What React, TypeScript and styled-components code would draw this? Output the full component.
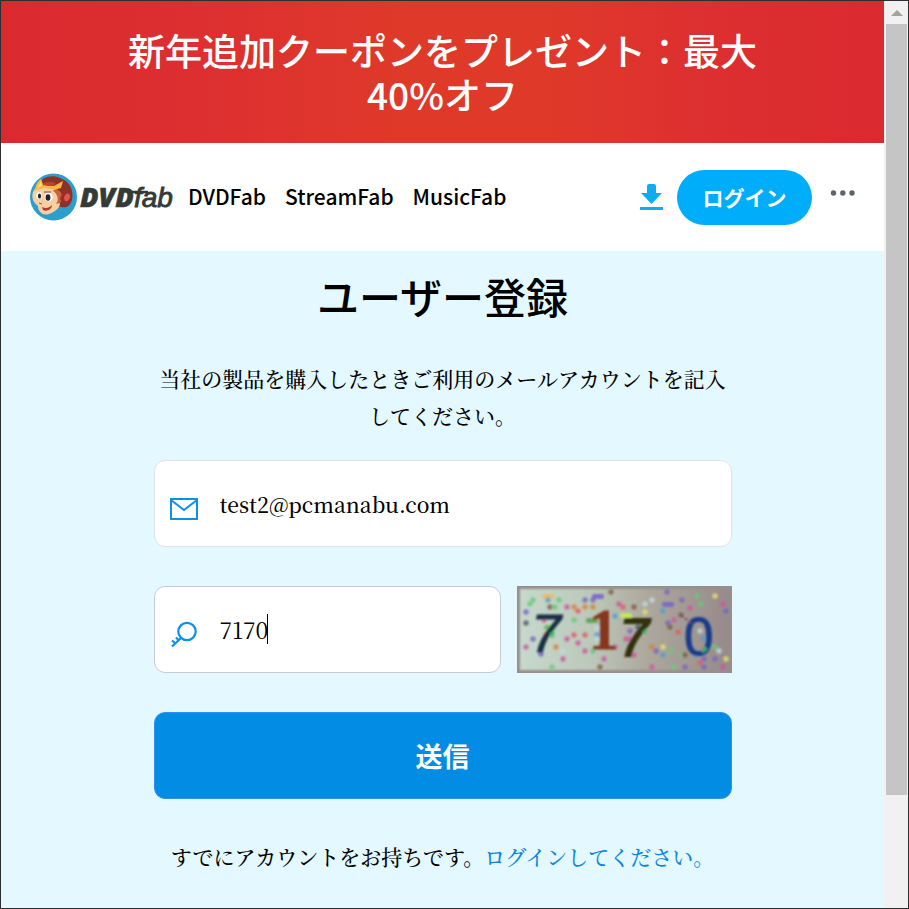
import React, { useState } from "react";
import styled, { createGlobalStyle } from "styled-components";

const sans = `"Noto Sans CJK JP", "Noto Sans", sans-serif`;
const serif = `"Noto Serif CJK JP", "Source Han Serif JP", "Liberation Serif", "Noto Sans CJK JP", serif`;

const GlobalStyle = createGlobalStyle`
  *, *::before, *::after { box-sizing: border-box; }
  body { margin: 0; background: #e4f8ff; color: #000; font-family: ${serif}; }
  h1, p { margin: 0; }
  a { text-decoration: none; }
`;

const Window = styled.div`
  display: flex;
  min-height: 100vh;
  border: 1px solid #2e2e2e;
`;

const Page = styled.div`
  flex: 1;
  min-width: 0;
`;

const ScrollTrack = styled.div`
  width: 24px;
  padding: 0 1px 0 2px;
  background: #f0f1f0;
  display: flex;
  flex-direction: column;
`;

const ScrollArrow = styled.div`
  height: 23px;
  display: flex;
  align-items: center;
  justify-content: center;
`;

const ScrollThumb = styled.div`
  flex: 0 0 85%;
  background: #c5c5c5;
`;

const Banner = styled.a`
  display: flex;
  justify-content: center;
  padding: 27px 24px;
  background: linear-gradient(90deg, #da2a30 0%, #dd3030 25%, #df3a29 47%, #df3929 62%, #dd3030 78%, #da2a30 100%);
  color: #fff;
  font: 500 37px/44px ${sans};
  text-align: center;
`;

const BannerText = styled.span`
  max-width: 664px;
`;

const Header = styled.header`
  display: flex;
  align-items: center;
  height: 108px;
  padding: 0 28px;
  background: #fff;
`;

const Brand = styled.a`
  display: flex;
  align-items: center;
  width: 145px;
  color: #343a36;
`;

const Nav = styled.nav`
  display: flex;
  gap: 19px;
  margin-left: 14px;
  padding-bottom: 2px;
`;

const NavLink = styled.a`
  color: #000;
  font: 500 21px/32px ${sans};
`;

const Actions = styled.div`
  display: flex;
  align-items: center;
  gap: 14px;
  margin-left: auto;
`;

const IconButton = styled.button`
  display: flex;
  padding: 0;
  border: 0;
  background: none;
`;

const MoreButton = styled(IconButton)`
  margin-left: 4px;
  padding-bottom: 8px;
`;

const LoginButton = styled.a`
  width: 135px;
  border-radius: 28px;
  background: #00adfa;
  color: #fff;
  font: 700 21px/55px ${sans};
  text-align: center;
`;

const Main = styled.main`
  width: calc(100% - 32px);
  max-width: 578px;
  margin: 0 auto;
  padding: 15px 0 32px;
  text-align: center;
`;

const Title = styled.h1`
  font: 500 42px/60px ${sans};
`;

const Lead = styled.p`
  margin: 34px 0 26px;
  font-size: 21px;
  font-weight: 500;
  line-height: 37px;
`;

const Form = styled.form`
  display: flex;
  flex-direction: column;
  gap: 39px;
`;

const CaptchaRow = styled.div`
  display: flex;
  gap: 16px;
`;

const Field = styled.label<{ $active?: boolean }>`
  position: relative;
  flex: 1;
  display: flex;
  align-items: center;
  gap: 20px;
  min-width: 0;
  min-height: 87px;
  padding: 0 13px;
  border: 1px solid ${(p) => (p.$active ? "#c8ccd2" : "#dbe3f0")};
  border-radius: 11px;
  background: #fff;

  svg { flex: none; margin-top: 11px; }
`;

const Input = styled.input<{ $size: number; $weight: number }>`
  flex: 1;
  min-width: 0;
  padding: 0;
  border: 0;
  outline: 0;
  background: none;
  color: #000;
  font: ${(p) => p.$weight} ${(p) => p.$size}px/32px ${serif};
`;

const Caret = styled.span`
  position: absolute;
  top: 27px;
  left: 112px;
  width: 1px;
  height: 30px;
  background: #000;
`;

const CaptchaImage = styled.svg`
  display: block;
  width: 215px;
  height: 87px;
`;

const Submit = styled.button`
  min-height: 87px;
  border: 1px solid #2e90f5;
  border-radius: 11px;
  background: #038ce4;
  color: #fff;
  font: 700 27px/40px ${sans};
`;

const Already = styled.p`
  margin-top: 39px;
  font-size: 21px;
  font-weight: 500;
  line-height: 37px;
`;

const TextLink = styled.a`
  color: #0b86dc;
`;

function Logo() {
  return (
    <svg width="145" height="50" viewBox="0 0 145 50" role="img" aria-label="DVDFab">
      <defs>
        <clipPath id="face"><circle cx="24.500" cy="25" r="22" /></clipPath>
      </defs>
      <circle cx="24.500" cy="25" r="23.500" fill="#2a9fce" />
      <g clipPath="url(#face)">
        <path d="M9 13C12 5 23 2 31 6C40 9 45 17 43 28C41 35 36 37 29 34L15 18Z" fill="#8c3328" />
        <path d="M5 18C9 13 19 14 26 17C30 18 32 22 29 27C34 32 29 39 20 42C14 44 9 40 9 34C3 30 2 23 5 18Z" fill="#f8cfa4" />
        <path d="M26 17C33 18 35 25 31 31L27 32C30 28 29 22 24 19Z" fill="#c9643f" />
        <path d="M31 27C33 18 41 17 43 23C44 29 38 34 34 31Z" fill="#9c2c2a" />
        <path d="M35 26C36 21 40 20 41 24C41 28 38 30 36 29Z" fill="#d9594b" />
        <path d="M13 12C18 9 24 9 27 12L22 15L14 16Z" fill="#b04a2a" />
        <path d="M5 19L8 11L12 6L14 13L19 14L25 14L34 9L32 16L25 18L17 16L10 17Z" fill="#fbb644" />
        <path d="M8 16L12 9L13 14Z" fill="#ffd978" />
        <ellipse cx="10" cy="23.500" rx="2.600" ry="3.500" fill="#fff" />
        <ellipse cx="19.500" cy="25" rx="4" ry="4.500" fill="#fff" />
        <ellipse cx="10.500" cy="24" rx="1.600" ry="2.600" fill="#24222c" />
        <ellipse cx="19" cy="25.500" rx="2.400" ry="3.200" fill="#24222c" />
        <path d="M15 20L22 20" stroke="#7a4430" strokeWidth="1" />
        <path d="M13 35C17 37 20 36 23 33C23 37 18 40 14 38Z" fill="#b23a34" />
        <path d="M10 31L13 32" stroke="#ae5438" strokeWidth="1" />
      </g>
      <text x="51" y="35" fill="#343a36" stroke="#343a36" strokeWidth="0.600" fontFamily="Open Sans" fontStyle="italic" fontWeight="800" fontSize="27">DVD</text>
      <text x="105" y="35" fill="#343a36" stroke="#343a36" strokeWidth="0.900" fontFamily="Liberation Sans" fontStyle="italic" fontSize="28">fab</text>
      <path d="M102 20H119" stroke="#343a36" strokeWidth="2.500" />
    </svg>
  );
}

const palette: Record<string, string> = {
  v: "#7965c4", g: "#69c879", p: "#cb59a2", b: "#539fd2", y: "#e5e36e",
  o: "#db8135", r: "#e45c62", w: "#bedce0", k: "#495b65", m: "#805d46",
};

const specks: [number, number, string][] = [
  [9, 26, "v"], [9, 37, "k"], [13, 18, "g"], [16, 14, "g"], [9, 61, "p"],
  [31, 14, "b"], [42, 14, "g"], [33, 21, "m"], [38, 21, "g"], [27, 34, "p"],
  [50, 21, "p"], [57, 21, "o"], [61, 25, "r"], [57, 34, "g"], [29, 49, "r"],
  [35, 50, "g"], [16, 53, "v"], [39, 61, "o"], [46, 65, "w"], [46, 73, "p"],
  [24, 68, "v"], [50, 53, "p"], [57, 49, "r"], [61, 57, "p"], [68, 65, "p"],
  [76, 65, "g"], [68, 14, "v"], [76, 14, "v"], [68, 21, "o"], [76, 21, "o"],
  [94, 6, "m"], [102, 18, "p"], [106, 21, "r"], [117, 21, "m"], [98, 30, "b"],
  [80, 42, "w"], [80, 49, "b"], [87, 73, "p"], [83, 81, "m"], [35, 81, "g"],
  [68, 49, "r"], [80, 53, "w"], [98, 61, "p"], [113, 45, "v"], [121, 41, "k"],
  [128, 26, "y"], [128, 18, "w"], [135, 14, "w"], [146, 25, "b"], [150, 6, "v"],
  [157, 34, "p"], [151, 37, "v"], [153, 41, "m"], [161, 46, "r"], [164, 29, "m"],
  [165, 14, "v"], [180, 10, "g"], [198, 10, "y"], [206, 18, "p"], [209, 25, "v"],
  [184, 18, "g"], [173, 22, "p"], [183, 45, "w"], [190, 38, "b"], [187, 53, "b"],
  [165, 69, "g"], [168, 69, "m"], [179, 69, "b"], [198, 61, "g"], [202, 65, "w"],
  [209, 73, "y"], [198, 73, "v"], [206, 81, "p"], [187, 73, "v"], [187, 81, "v"],
  [183, 77, "r"], [168, 81, "v"], [157, 81, "g"], [135, 81, "p"], [139, 65, "v"],
  [146, 69, "b"], [154, 65, "g"], [146, 61, "y"], [135, 61, "o"], [117, 69, "p"],
  [109, 53, "p"], [113, 53, "p"], [128, 45, "g"],
];

const streaks: [number, number, string][] = [
  [31, 10, "#eeb95b"], [81, 10, "#7661cd"], [109, 29, "#c8ed50"], [151, 18, "#7661cd"],
  [33, 41, "#65b95d"], [75, 34, "#589d4d"],
];

function Captcha() {
  return (
    <CaptchaImage viewBox="0 0 215 87" role="img" aria-label="7170">
      <defs>
        <linearGradient id="paper">
          <stop offset="0" stopColor="#c6d9cd" />
          <stop offset="0.350" stopColor="#bbc8b9" />
          <stop offset="0.600" stopColor="#ada99d" />
          <stop offset="1" stopColor="#978a8a" />
        </linearGradient>
        <filter id="soft"><feGaussianBlur stdDeviation="0.8" /></filter>
      </defs>
      <rect width="215" height="87" fill="#988e8b" />
      <rect x="3" y="3" width="209" height="81" fill="url(#paper)" filter="url(#soft)" />
      <g filter="url(#soft)">
        {streaks.map(([x, y, c]) => (
          <rect key={`${x}-${y}`} x={x - 6} y={y - 2} width="12" height="5" rx="2" fill={c} opacity="0.85" />
        ))}
        <g opacity="0.8">
          {specks.map(([x, y, c]) => (
            <circle key={`${x}-${y}`} cx={x} cy={y} r="2.700" fill={palette[c]} />
          ))}
        </g>
        <g fontFamily="Liberation Sans" fontSize="54">
          <text x="14" y="66" fill="#142e43" stroke="#142e43" fontStyle="italic">7</text>
          <text x="72" y="63" fill="#87351f" stroke="#87351f" fontFamily="Liberation Serif" fontSize="58" fontWeight="700">1</text>
          <text x="102" y="70" fill="#33310e" stroke="#33310e" strokeWidth="2" fontStyle="italic">7</text>
          <text x="167" y="69" fill="#193b8c" stroke="#193b8c" fontSize="53">0</text>
        </g>
        <path d="M164 29L175 38" stroke="#804775" strokeWidth="2" strokeDasharray="3 2" />
        <path d="M33 49L37 46M126 47L129 44M185 66L190 62" stroke="#3fae6c" strokeWidth="3" />
      </g>
    </CaptchaImage>
  );
}

export default function App() {
  const [email, setEmail] = useState("test2@pcmanabu.com");
  const [code, setCode] = useState("7170");

  return (
    <>
      <GlobalStyle />
      <Window lang="ja">
        <Page>
          <Banner href="#coupon">
            <BannerText>新年追加クーポンをプレゼント：最大40%オフ</BannerText>
          </Banner>
          <Header>
            <Brand href="#home"><Logo /></Brand>
            <Nav>
              <NavLink href="#dvdfab">DVDFab</NavLink>
              <NavLink href="#streamfab">StreamFab</NavLink>
              <NavLink href="#musicfab">MusicFab</NavLink>
            </Nav>
            <Actions>
              <IconButton type="button" aria-label="ダウンロード">
                <svg width="23" height="26" viewBox="0 0 23 26" fill="#0eadef">
                  <path d="M7 2Q7 0 9 0H14Q16 0 16 2V9H22L11.500 20L1 9H7Z" />
                  <path d="M0 23H23V26H0Z" />
                </svg>
              </IconButton>
              <LoginButton href="#login">ログイン</LoginButton>
              <MoreButton type="button" aria-label="メニュー">
                <svg width="26" height="6" viewBox="0 0 26 6" fill="#5c6468">
                  <circle cx="3.500" cy="3" r="2.700" />
                  <circle cx="12.800" cy="3" r="2.700" />
                  <circle cx="22" cy="3" r="2.700" />
                </svg>
              </MoreButton>
            </Actions>
          </Header>
          <Main>
            <Title>ユーザー登録</Title>
            <Lead>当社の製品を購入したときご利用のメールアカウントを記入してください。</Lead>
            <Form onSubmit={(e) => e.preventDefault()}>
              <Field>
                <svg width="32" height="26" viewBox="0 0 32 26" fill="none" stroke="#0b91e6" strokeWidth="2">
                  <path d="M3 3H29V23H3Z" />
                  <path d="M3 4L16 14L29 4" />
                </svg>
                <Input $size={21} $weight={500} type="email" aria-label="メールアドレス" value={email} onChange={(e) => setEmail(e.target.value)} />
              </Field>
              <CaptchaRow>
                <Field $active>
                  <svg width="32" height="28" viewBox="0 0 32 28" fill="none" stroke="#0b91e6" strokeWidth="2.200">
                    <circle cx="19" cy="10.500" r="8.700" />
                    <path d="M13 17L4 25.500M4 19.500L8 23M8 16.500L11.500 20" />
                  </svg>
                  <Input $size={23} $weight={400} aria-label="認証コード" value={code} onChange={(e) => setCode(e.target.value)} />
                  <Caret />
                </Field>
                <Captcha />
              </CaptchaRow>
              <Submit type="submit">送信</Submit>
            </Form>
            <Already>
              すでにアカウントをお持ちです。<TextLink href="#login">ログインしてください。</TextLink>
            </Already>
          </Main>
        </Page>
        <ScrollTrack aria-hidden="true">
          <ScrollArrow>
            <svg width="12" height="6" viewBox="0 0 12 6" fill="#a0a49a"><path d="M0 6L6 0L12 6Z" /></svg>
          </ScrollArrow>
          <ScrollThumb />
        </ScrollTrack>
      </Window>
    </>
  );
}
